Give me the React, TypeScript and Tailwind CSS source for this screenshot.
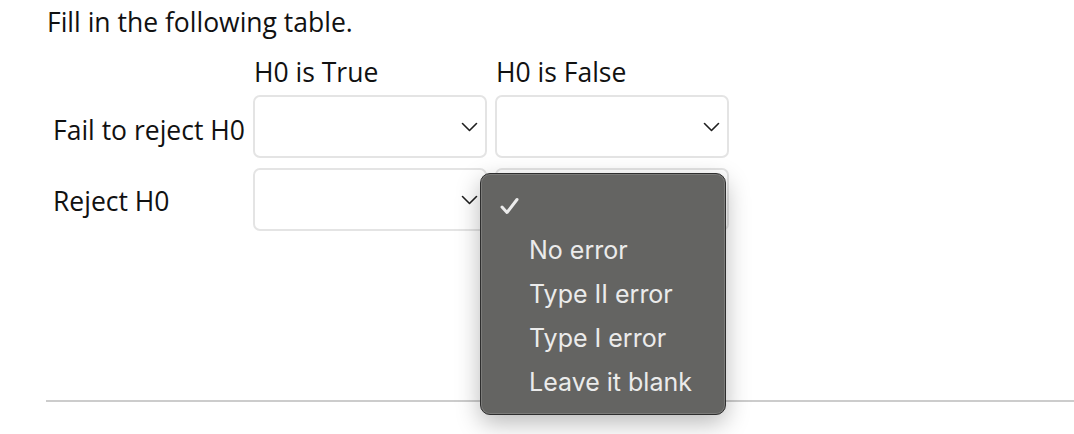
import React from 'react';

const Chevron = () => (
  <svg width="17" height="10" viewBox="0 0 17 10" fill="none" className="text-[#1f1f1f]">
    <path d="M1.5 1.5 L8.5 8.5 L15.5 1.5" stroke="currentColor" strokeWidth="1.6" strokeLinecap="round" strokeLinejoin="round" />
  </svg>
);

const SelectBox: React.FC<{ children?: React.ReactNode }> = ({ children }) => (
  <div className="relative h-[63px] w-[234px] rounded-[7px] border-2 border-[#e4e4e4] bg-white flex items-center justify-end pr-[7px]">
    <Chevron />
    {children}
  </div>
);

const options = ['No error', 'Type II error', 'Type I error', 'Leave it blank'];

const OptionsMenu = () => (
  <div className="absolute left-[-15px] top-[5px] z-10 w-[246px] rounded-[10px] border border-[#2e2e2e] bg-[#646462] py-[10px] shadow-[0_8px_24px_rgba(0,0,0,0.28)] [font-family:Inter,'Liberation_Sans',sans-serif]">
    <div className="absolute inset-0 rounded-[9px] ring-1 ring-inset ring-white/15 pointer-events-none" />
    <div className="h-[44px] flex items-center pl-[19px]">
      <svg width="19" height="18" viewBox="0 0 19 18" fill="none">
        <path d="M2 10 L7 15.5 L17 2.5" stroke="#ececec" strokeWidth="3" strokeLinecap="round" strokeLinejoin="round" />
      </svg>
    </div>
    {options.map(o => (
      <div key={o} className="h-[44px] flex items-center pl-[48px] text-[25px] text-[#ebebeb]">
        {o}
      </div>
    ))}
  </div>
);

export default function App() {
  return (
    <div className="bg-white min-h-[434px] pt-[7px] [font-family:'Open_Sans',sans-serif] text-[#111] overflow-hidden">
      <div className="pl-[47px]">
        <p className="text-[26.5px] leading-[30px] whitespace-nowrap">Fill in the following table.</p>
      </div>

      <div className="pl-[53px] mt-[20px]">
        <div className="grid grid-cols-[200px_242px_234px] mb-[8px] text-[26.5px] leading-[30px] whitespace-nowrap">
          <div />
          <div className="pl-[1px]">H0 is True</div>
          <div className="pl-[1px]">H0 is False</div>
        </div>

        <div className="grid grid-cols-[200px_242px_234px] gap-y-[10px] text-[26.5px] leading-[30px] whitespace-nowrap">
          <div className="flex items-center pt-[6px]">Fail to reject H0</div>
          <SelectBox />
          <SelectBox />

          <div className="flex items-center pt-[2px]">Reject H0</div>
          <SelectBox />
          <div className="relative">
            <SelectBox />
            <OptionsMenu />
          </div>
        </div>
      </div>

      <div className="ml-[46px] mt-[169px] h-[2px] bg-[#cccccc]" />
    </div>
  );
}
